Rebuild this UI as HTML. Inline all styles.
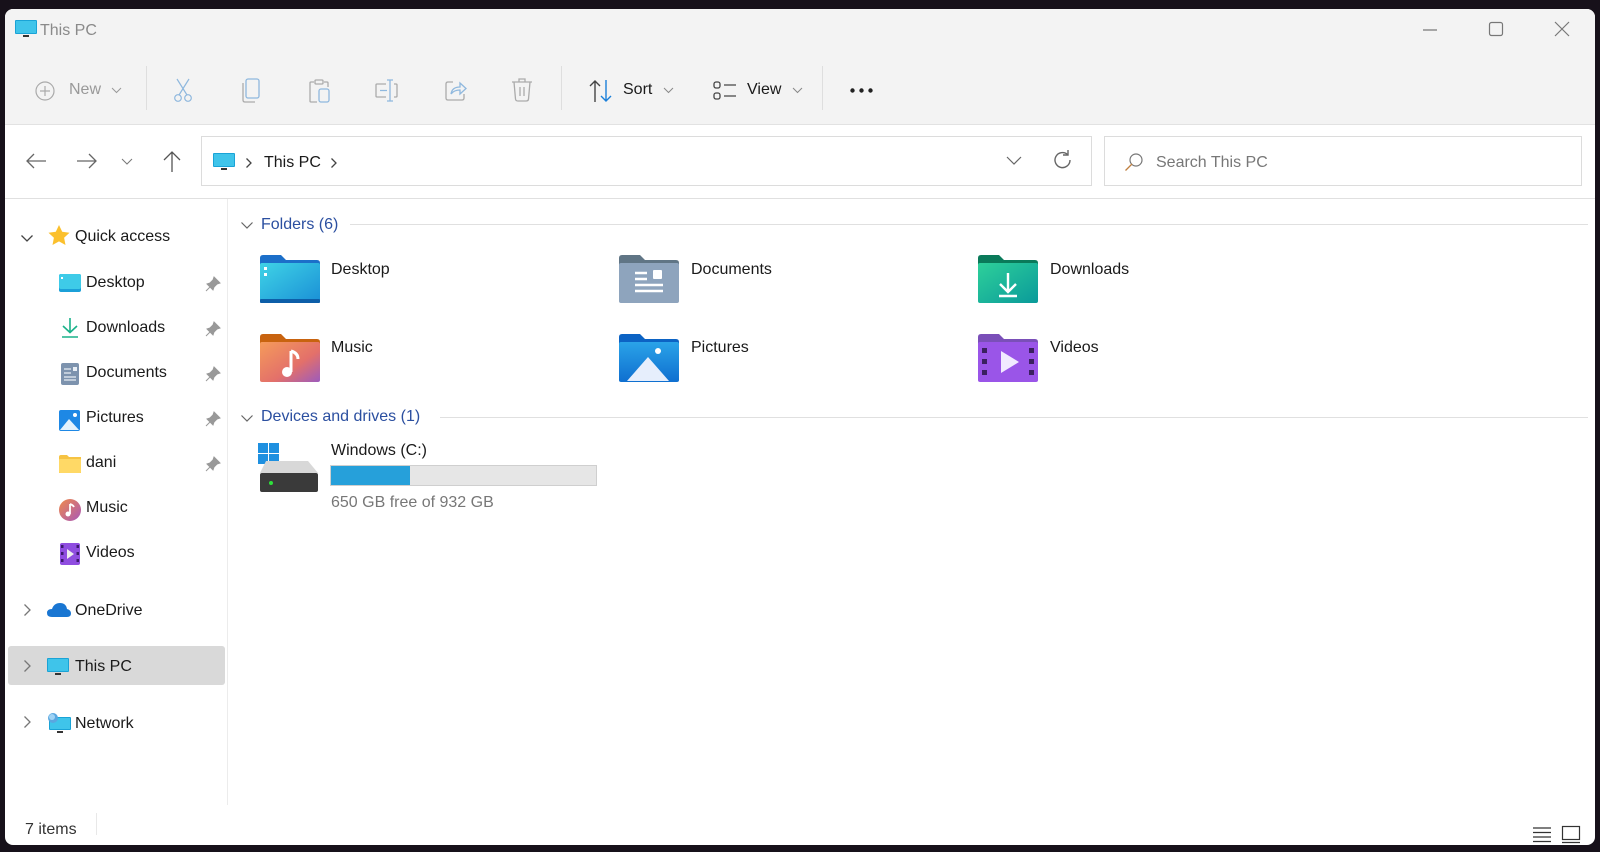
<!DOCTYPE html>
<html><head><meta charset="utf-8"><style>
*{margin:0;padding:0;box-sizing:border-box}
body{width:1600px;height:852px;background:#17111a;font-family:"Liberation Sans",sans-serif;overflow:hidden;position:relative;color:#1a1a1a}
.win{position:absolute;left:5px;top:9px;width:1590px;height:836px;background:#fff;border-radius:8px;overflow:hidden}
.top{position:absolute;left:0;top:0;width:100%;height:116px;background:#f3f3f3;border-bottom:1px solid #e2e2e2}
.a{position:absolute;white-space:nowrap}
.t16{font-size:16px}
.sep{position:absolute;width:1px;background:#dedede}
svg{position:absolute;overflow:visible}
</style></head><body>
<div class="win">
<div class="top"></div>
<!-- title -->
<svg style="left:10px;top:11px" width="22" height="18"><rect x="0" y="0" width="22" height="14" rx="1" fill="#1aa3d6"/><rect x="1" y="1" width="20" height="12" fill="#3fc4ea"/><rect x="8" y="15" width="6" height="2" fill="#333"/></svg>
<div class="a" style="left:35px;top:13px;font-size:16px;color:#8a8a8a">This PC</div>
<svg style="left:1418px;top:20px" width="14" height="2"><line x1="0" y1="1" x2="14" y2="1" stroke="#777" stroke-width="1.2"/></svg>
<svg style="left:1484px;top:13px" width="14" height="14"><rect x="0.5" y="0.5" width="13" height="13" rx="2" fill="none" stroke="#777" stroke-width="1.2"/></svg>
<svg style="left:1550px;top:13px" width="14" height="14"><path d="M0 0L14 14M14 0L0 14" stroke="#777" stroke-width="1.2"/></svg>
<!-- toolbar -->
<svg style="left:30px;top:72px" width="20" height="20"><circle cx="10" cy="10" r="9" fill="none" stroke="#aaa" stroke-width="1.2"/><path d="M10 5V15M5 10H15" stroke="#aaa" stroke-width="1.2"/></svg>
<div class="a" style="left:64px;top:72px;font-size:16px;color:#999">New</div>
<svg style="left:107px;top:79px" width="9" height="6"><path d="M0 0L4.5 4.5L9 0" fill="none" stroke="#999"/></svg>
<div class="sep" style="left:141px;top:57px;height:44px"></div>
<svg style="left:168px;top:70px" width="22" height="24"><path d="M4 0L14 16M16 0L6 16" stroke="#8fb8de" stroke-width="1.2" fill="none"/><circle cx="5" cy="19" r="3.3" fill="none" stroke="#8fb8de" stroke-width="1.2"/><circle cx="15" cy="19" r="3.3" fill="none" stroke="#8fb8de" stroke-width="1.2"/></svg>
<svg style="left:237px;top:70px" width="20" height="24"><rect x="4" y="0" width="13" height="19" rx="2" fill="none" stroke="#8fb8de" stroke-width="1.3"/><path d="M1 4V21Q1 23 3 23H13" fill="none" stroke="#aaa" stroke-width="1.3"/></svg>
<svg style="left:304px;top:70px" width="22" height="24"><path d="M5 3H2Q1 3 1 4V22Q1 23 2 23H8M15 3H18Q19 3 19 4V8" fill="none" stroke="#aaa" stroke-width="1.3"/><rect x="6" y="1" width="8" height="4" rx="1" fill="none" stroke="#aaa" stroke-width="1.3"/><rect x="10" y="10" width="10" height="13" rx="2" fill="none" stroke="#8fb8de" stroke-width="1.3"/></svg>
<svg style="left:370px;top:70px" width="24" height="24"><path d="M11 5H2Q1 5 1 6V17Q1 18 2 18H11M19 5H21Q22 5 22 6V17Q22 18 21 18H19" fill="none" stroke="#aaa" stroke-width="1.3"/><path d="M15 1V22M12 1H18M12 22H18M5 11.5H12" stroke="#8fb8de" stroke-width="1.3"/></svg>
<svg style="left:440px;top:70px" width="22" height="22"><path d="M8 3H3Q1 3 1 5V19Q1 21 3 21H17Q19 21 19 19V15" fill="none" stroke="#aaa" stroke-width="1.3"/><path d="M6 15Q7 8 15 8V4L21 9.5L15 15V11Q9 11 6 15Z" fill="none" stroke="#8fb8de" stroke-width="1.3"/></svg>
<svg style="left:507px;top:69px" width="20" height="24"><path d="M0 4H20M7 4V1H13V4M2 4L3.5 21Q3.7 23 6 23H14Q16.3 23 16.5 21L18 4M8 9V18M12 9V18" fill="none" stroke="#aaa" stroke-width="1.3"/></svg>
<div class="sep" style="left:556px;top:57px;height:44px"></div>
<svg style="left:584px;top:71px" width="24" height="22"><path d="M6 22V1M1 6L6 1L11 6" fill="none" stroke="#444" stroke-width="1.4"/><path d="M17 0V21M12 16L17 21L22 16" fill="none" stroke="#1a7fd9" stroke-width="1.4"/></svg>
<div class="a" style="left:618px;top:72px;font-size:16px;color:#1a1a1a">Sort</div>
<svg style="left:659px;top:79px" width="9" height="6"><path d="M0 0L4.5 4.5L9 0" fill="none" stroke="#888"/></svg>
<svg style="left:708px;top:72px" width="24" height="20"><rect x="1" y="1" width="6" height="6" rx="2" fill="none" stroke="#444" stroke-width="1.3"/><rect x="1" y="12" width="6" height="6" rx="2" fill="none" stroke="#444" stroke-width="1.3"/><path d="M11 4H23M11 15H23" stroke="#444" stroke-width="1.3"/></svg>
<div class="a" style="left:742px;top:72px;font-size:16px;color:#1a1a1a">View</div>
<svg style="left:788px;top:79px" width="9" height="6"><path d="M0 0L4.5 4.5L9 0" fill="none" stroke="#888"/></svg>
<div class="sep" style="left:817px;top:57px;height:44px"></div>
<svg style="left:845px;top:79px" width="24" height="5"><circle cx="2.5" cy="2.5" r="2.2" fill="#222"/><circle cx="11.5" cy="2.5" r="2.2" fill="#222"/><circle cx="20.5" cy="2.5" r="2.2" fill="#222"/></svg>
<!-- nav row -->
<svg style="left:21px;top:144px" width="20" height="16"><path d="M20 8H1M8 1L1 8L8 15" fill="none" stroke="#666" stroke-width="1.3"/></svg>
<svg style="left:72px;top:144px" width="20" height="16"><path d="M0 8H19M12 1L19 8L12 15" fill="none" stroke="#666" stroke-width="1.3"/></svg>
<svg style="left:117px;top:150px" width="10" height="6"><path d="M0 0L5 5L10 0" fill="none" stroke="#777"/></svg>
<svg style="left:158px;top:142px" width="18" height="21"><path d="M9 21V1M1 9L9 1L17 9" fill="none" stroke="#555" stroke-width="1.3"/></svg>
<div class="a" style="left:196px;top:127px;width:891px;height:50px;border:1px solid #dcdcdc"></div>
<svg style="left:208px;top:144px" width="22" height="18"><rect x="0" y="0" width="22" height="14" rx="1" fill="#1aa3d6"/><rect x="1" y="1" width="20" height="12" fill="#3fc4ea"/><rect x="8" y="15" width="6" height="2" fill="#333"/></svg>
<svg style="left:241px;top:149px" width="6" height="10"><path d="M0.5 0.5L5 5L0.5 9.5" fill="none" stroke="#444" stroke-width="1.3"/></svg>
<div class="a" style="left:259px;top:145px;font-size:16px">This PC</div>
<svg style="left:326px;top:149px" width="6" height="10"><path d="M0.5 0.5L5 5L0.5 9.5" fill="none" stroke="#444" stroke-width="1.3"/></svg>
<svg style="left:1002px;top:148px" width="14" height="8"><path d="M0 0L7 7L14 0" fill="none" stroke="#666" stroke-width="1.2"/></svg>
<svg style="left:1048px;top:141px" width="20" height="20"><path d="M17 10A7.5 7.5 0 1 1 14.5 4.5" fill="none" stroke="#666" stroke-width="1.4"/><path d="M15 0V5H10" fill="none" stroke="#666" stroke-width="1.4"/></svg>
<div class="a" style="left:1099px;top:127px;width:478px;height:50px;border:1px solid #dcdcdc"></div>
<svg style="left:1120px;top:144px" width="18" height="18"><circle cx="11" cy="7" r="6" fill="none" stroke="#777" stroke-width="1.2"/><path d="M7 11L0.5 17.5" stroke="#c08040" stroke-width="1.3"/></svg>
<div class="a" style="left:1151px;top:145px;font-size:16px;color:#777">Search This PC</div>
<div class="a" style="left:0;top:189px;width:100%;height:1px;background:#e0e0e0"></div>
<!-- sidebar -->
<div class="a" style="left:222px;top:190px;width:1px;height:606px;background:#ececec"></div>
<svg style="left:16px;top:226px" width="12" height="7"><path d="M0.5 0.5L6 6L11.5 0.5" fill="none" stroke="#444" stroke-width="1.3"/></svg>
<svg style="left:43px;top:216px" width="22" height="21"><path d="M11 0L14.2 6.8L21.5 7.7L16.1 12.8L17.5 20L11 16.4L4.5 20L5.9 12.8L0.5 7.7L7.8 6.8Z" fill="#fbc02d"/></svg>
<div class="a t16" style="left:70px;top:219px">Quick access</div>
<div class="a t16" style="left:81px;top:265px">Desktop</div>
<div class="a t16" style="left:81px;top:310px">Downloads</div>
<div class="a t16" style="left:81px;top:355px">Documents</div>
<div class="a t16" style="left:81px;top:400px">Pictures</div>
<div class="a t16" style="left:81px;top:445px">dani</div>
<div class="a t16" style="left:81px;top:490px">Music</div>
<div class="a t16" style="left:81px;top:535px">Videos</div>
<!-- sidebar icons -->
<svg style="left:54px;top:265px" width="22" height="18"><rect width="22" height="18" rx="2" fill="#1ba0d8"/><rect width="22" height="15" rx="2" fill="#3ecbe8"/><rect x="2" y="3" width="2" height="2" fill="#fff"/></svg>
<svg style="left:56px;top:309px" width="18" height="20"><path d="M9 0V14M2 8L9 14.5L16 8M1 19H17" fill="none" stroke="#1ab28a" stroke-width="1.6"/></svg>
<svg style="left:56px;top:354px" width="18" height="22"><rect width="18" height="22" rx="2" fill="#7d93ae"/><path d="M3 6H10M3 10H10M3 14H15M3 17H15" stroke="#e8eef5" stroke-width="1.3"/><rect x="12" y="4" width="4" height="4" fill="#e8eef5"/></svg>
<svg style="left:54px;top:401px" width="21" height="21"><rect width="21" height="21" rx="2" fill="#1e88e5"/><path d="M1 20L10 9L20 20Z" fill="#e3f2fd"/><circle cx="16" cy="5" r="2" fill="#fff"/></svg>
<svg style="left:54px;top:446px" width="22" height="18"><path d="M0 2Q0 0 2 0H8L10 2H22V18H0Z" fill="#f6c343"/><rect x="0" y="4" width="22" height="14" rx="1" fill="#ffd966"/></svg>
<svg style="left:54px;top:490px" width="22" height="22"><defs><linearGradient id="mg" x1="0" y1="0" x2="1" y2="1"><stop offset="0" stop-color="#f08a4b"/><stop offset="1" stop-color="#a857b8"/></linearGradient></defs><circle cx="11" cy="11" r="11" fill="url(#mg)"/><path d="M11 5V15" stroke="#fff" stroke-width="1.8"/><circle cx="9" cy="15" r="2.5" fill="#fff"/><path d="M11 5Q14 6 15 8" stroke="#fff" stroke-width="1.8" fill="none"/></svg>
<svg style="left:55px;top:534px" width="20" height="22"><rect width="20" height="22" rx="2" fill="#8f4de0"/><rect x="1" y="2" width="2.5" height="3" fill="#3d1a6e"/><rect x="1" y="9" width="2.5" height="3" fill="#3d1a6e"/><rect x="1" y="16" width="2.5" height="3" fill="#3d1a6e"/><rect x="16.5" y="2" width="2.5" height="3" fill="#3d1a6e"/><rect x="16.5" y="9" width="2.5" height="3" fill="#3d1a6e"/><rect x="16.5" y="16" width="2.5" height="3" fill="#3d1a6e"/><path d="M7 6L14 11L7 16Z" fill="#eee"/></svg>
<!-- pins -->
<svg style="left:201px;top:268px" width="14" height="14"><path d="M8 0L14 6L11 7L8 10L7 13L1 7L4 6L7 3Z M4 10L0 14" fill="#999" stroke="#999"/></svg>
<svg style="left:201px;top:313px" width="14" height="14"><path d="M8 0L14 6L11 7L8 10L7 13L1 7L4 6L7 3Z M4 10L0 14" fill="#999" stroke="#999"/></svg>
<svg style="left:201px;top:358px" width="14" height="14"><path d="M8 0L14 6L11 7L8 10L7 13L1 7L4 6L7 3Z M4 10L0 14" fill="#999" stroke="#999"/></svg>
<svg style="left:201px;top:403px" width="14" height="14"><path d="M8 0L14 6L11 7L8 10L7 13L1 7L4 6L7 3Z M4 10L0 14" fill="#999" stroke="#999"/></svg>
<svg style="left:201px;top:448px" width="14" height="14"><path d="M8 0L14 6L11 7L8 10L7 13L1 7L4 6L7 3Z M4 10L0 14" fill="#999" stroke="#999"/></svg>
<svg style="left:19px;top:595px" width="7" height="12"><path d="M0.5 0.5L6 6L0.5 11.5" fill="none" stroke="#777" stroke-width="1.3"/></svg>
<svg style="left:42px;top:594px" width="24" height="14"><path d="M5 14Q0 14 0 10Q0 6 5 6Q7 0 13 0Q19 0 20 6Q24 7 24 10.5Q24 14 20 14Z" fill="#1976d2"/></svg>
<div class="a t16" style="left:70px;top:593px">OneDrive</div>
<div class="a" style="left:3px;top:637px;width:217px;height:39px;background:#d9d9d9;border-radius:3px"></div>
<svg style="left:19px;top:651px" width="7" height="12"><path d="M0.5 0.5L6 6L0.5 11.5" fill="none" stroke="#777" stroke-width="1.3"/></svg>
<svg style="left:42px;top:649px" width="22" height="18"><rect x="0" y="0" width="22" height="14" rx="1" fill="#1aa3d6"/><rect x="1" y="1" width="20" height="12" fill="#3fc4ea"/><rect x="8" y="15" width="6" height="2" fill="#333"/></svg>
<div class="a t16" style="left:70px;top:649px">This PC</div>
<svg style="left:19px;top:707px" width="7" height="12"><path d="M0.5 0.5L6 6L0.5 11.5" fill="none" stroke="#777" stroke-width="1.3"/></svg>
<svg style="left:42px;top:704px" width="24" height="20"><rect x="2" y="4" width="22" height="13" rx="1" fill="#1aa3d6"/><rect x="3" y="5" width="20" height="11" fill="#3fc4ea"/><rect x="10" y="18" width="6" height="2" fill="#333"/><circle cx="6" cy="5" r="5" fill="#5aa7e0"/><circle cx="5" cy="4" r="3" fill="#9fd3f5"/></svg>
<div class="a t16" style="left:70px;top:706px">Network</div>
<!-- status -->
<div class="a" style="left:20px;top:812px;font-size:16px;color:#333">7 items</div>
<div class="a" style="left:91px;top:804px;width:1px;height:22px;background:#e8e8e8"></div>
<svg style="left:1528px;top:818px" width="18" height="15"><path d="M0 1H18M0 5.5H18M0 10H18M0 14.5H18" stroke="#333" stroke-width="1.2"/></svg>
<svg style="left:1557px;top:817px" width="18" height="17"><rect x="0.5" y="0.5" width="17" height="13" fill="none" stroke="#333" stroke-width="1.2"/><path d="M0 16.5H18" stroke="#333" stroke-width="1.2"/></svg>
<!-- content -->
<svg style="left:236px;top:213px" width="12" height="7"><path d="M0.5 0.5L6 6L11.5 0.5" fill="none" stroke="#666" stroke-width="1.2"/></svg>
<div class="a" style="left:256px;top:207px;font-size:16px;color:#2b4fa0">Folders (6)</div>
<div class="a" style="left:345px;top:215px;width:1238px;height:1px;background:#e0e0e0"></div>
<svg style="left:236px;top:406px" width="12" height="7"><path d="M0.5 0.5L6 6L11.5 0.5" fill="none" stroke="#666" stroke-width="1.2"/></svg>
<div class="a" style="left:256px;top:399px;font-size:16px;color:#2b4fa0">Devices and drives (1)</div>
<div class="a" style="left:435px;top:408px;width:1148px;height:1px;background:#e0e0e0"></div>
<!-- folders -->
<svg style="left:255px;top:246px" width="60" height="48"><defs><linearGradient id="dg" x1="0" y1="0" x2="1" y2="1"><stop offset="0" stop-color="#3fd3e6"/><stop offset="1" stop-color="#1a8fd6"/></linearGradient></defs><path d="M0 3Q0 0 3 0H21L26 5H57Q60 5 60 8V20H0Z" fill="#1c6fc9"/><rect y="8" width="60" height="40" rx="2" fill="url(#dg)"/><rect y="44" width="60" height="4" rx="1" fill="#0d5ea8"/><rect x="4" y="12" width="3" height="3" fill="#fff"/><rect x="4" y="18" width="3" height="3" fill="#fff"/></svg>
<div class="a t16" style="left:326px;top:252px">Desktop</div>
<svg style="left:614px;top:246px" width="60" height="48"><path d="M0 3Q0 0 3 0H21L26 5H57Q60 5 60 8V20H0Z" fill="#607585"/><rect y="8" width="60" height="40" rx="2" fill="#8ea4bd"/><path d="M16 18H28M16 24H28M16 30H44M16 36H44" stroke="#fff" stroke-width="2.5"/><rect x="34" y="15" width="9" height="9" rx="1" fill="#fff"/></svg>
<div class="a t16" style="left:686px;top:252px">Documents</div>
<svg style="left:973px;top:246px" width="60" height="48"><defs><linearGradient id="gg" x1="0" y1="0" x2="1" y2="1"><stop offset="0" stop-color="#2ed09a"/><stop offset="1" stop-color="#0a9a9a"/></linearGradient></defs><path d="M0 3Q0 0 3 0H21L26 5H57Q60 5 60 8V20H0Z" fill="#0a7a5a"/><rect y="8" width="60" height="40" rx="2" fill="url(#gg)"/><path d="M30 18V37M22 29L30 37L38 29M21 41H39" fill="none" stroke="#fff" stroke-width="2.4"/></svg>
<div class="a t16" style="left:1045px;top:252px">Downloads</div>
<svg style="left:255px;top:325px" width="60" height="48"><defs><linearGradient id="og" x1="0" y1="0" x2="1" y2="1"><stop offset="0" stop-color="#f59b5a"/><stop offset="0.6" stop-color="#e3706a"/><stop offset="1" stop-color="#9c5bbd"/></linearGradient></defs><path d="M0 3Q0 0 3 0H21L26 5H57Q60 5 60 8V20H0Z" fill="#c8630f"/><rect y="8" width="60" height="40" rx="2" fill="url(#og)"/><path d="M31 17V38" stroke="#fff" stroke-width="3"/><circle cx="27" cy="38" r="5" fill="#fff"/><path d="M31 17Q38 19 38 25" stroke="#fff" stroke-width="3" fill="none"/></svg>
<div class="a t16" style="left:326px;top:330px">Music</div>
<svg style="left:614px;top:325px" width="60" height="48"><defs><linearGradient id="pg" x1="0" y1="0" x2="0" y2="1"><stop offset="0" stop-color="#2aa3e8"/><stop offset="1" stop-color="#0f6fd0"/></linearGradient></defs><path d="M0 3Q0 0 3 0H21L26 5H57Q60 5 60 8V20H0Z" fill="#0c63c4"/><rect y="8" width="60" height="40" rx="2" fill="url(#pg)"/><path d="M8 47L29 23L50 47Z" fill="#e6eefc"/><circle cx="39" cy="17" r="3" fill="#fff"/></svg>
<div class="a t16" style="left:686px;top:330px">Pictures</div>
<svg style="left:973px;top:325px" width="60" height="48"><path d="M0 3Q0 0 3 0H21L26 5H57Q60 5 60 8V20H0Z" fill="#7a4fb8"/><rect y="8" width="60" height="40" rx="2" fill="#9a55e8"/><g fill="#3b2060"><rect x="4" y="14" width="5" height="5"/><rect x="4" y="25" width="5" height="5"/><rect x="4" y="36" width="5" height="5"/><rect x="51" y="14" width="5" height="5"/><rect x="51" y="25" width="5" height="5"/><rect x="51" y="36" width="5" height="5"/></g><path d="M23 17L41 28L23 39Z" fill="#f1eaff"/></svg>
<div class="a t16" style="left:1045px;top:330px">Videos</div>
<!-- drive -->
<svg style="left:253px;top:434px" width="62" height="52"><rect x="0" y="0" width="10" height="10" fill="#1e90e0"/><rect x="11" y="0" width="10" height="10" fill="#1e90e0"/><rect x="0" y="11" width="10" height="10" fill="#1e90e0"/><rect x="11" y="11" width="10" height="10" fill="#1e90e0"/><path d="M8 18H50L60 30H2Z" fill="#d8d8d8"/><rect x="2" y="30" width="58" height="19" rx="2" fill="#3a3a3a"/><circle cx="13" cy="40" r="2" fill="#2ee03a"/></svg>
<div class="a t16" style="left:326px;top:433px">Windows (C:)</div>
<div class="a" style="left:325px;top:456px;width:267px;height:21px;background:#e6e6e6;border:1px solid #cfcfcf"></div>
<div class="a" style="left:326px;top:457px;width:79px;height:19px;background:#26a0da"></div>
<div class="a" style="left:326px;top:485px;font-size:16px;color:#777">650 GB free of 932 GB</div>
</div>
</body></html>
